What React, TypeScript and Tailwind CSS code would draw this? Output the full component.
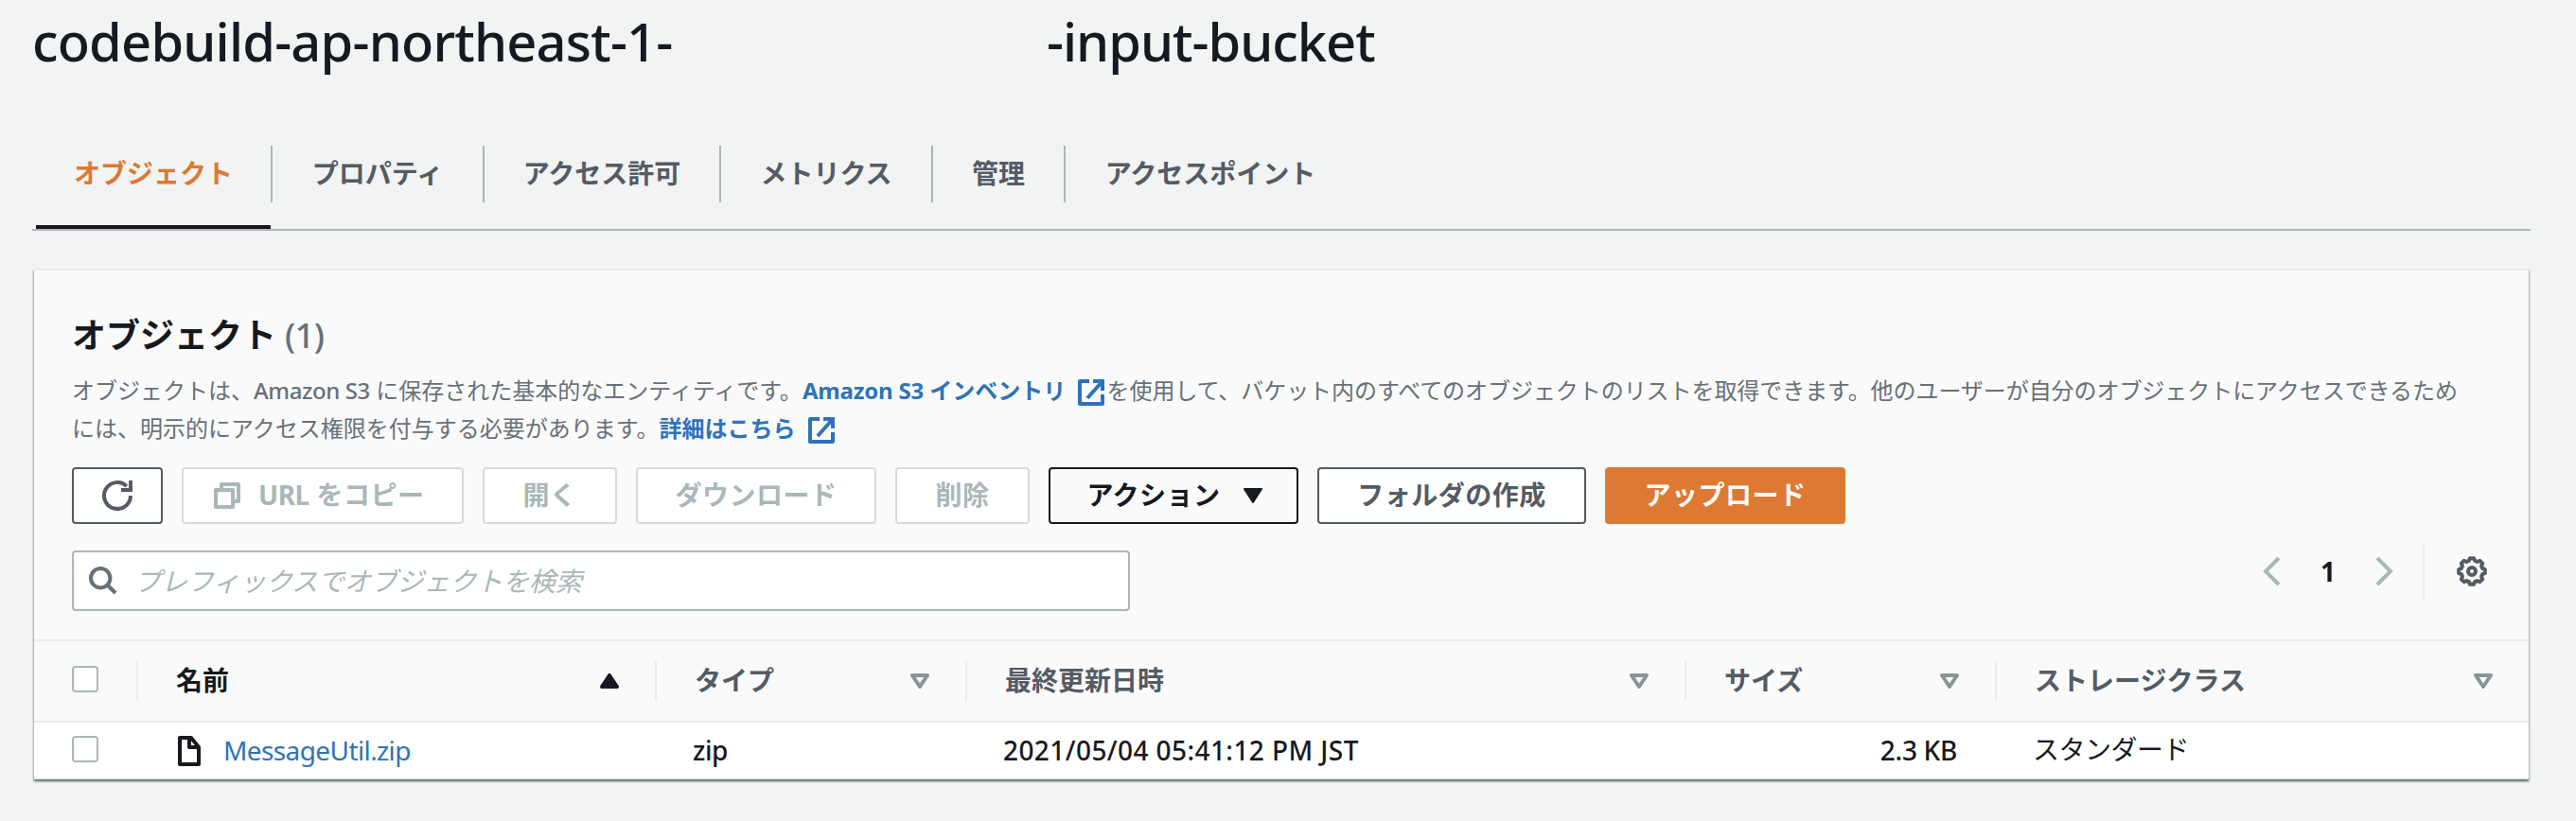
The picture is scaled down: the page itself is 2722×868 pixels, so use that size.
import React from 'react';
import { clsx } from 'clsx';

interface Tab {
  label: string;
  width: string;
  active?: boolean;
}

interface Column {
  label: string;
  width: string;
  sorted?: boolean;
}

const tabs: Tab[] = [
  { label: 'オブジェクト', width: 'w-[250px]', active: true },
  { label: 'プロパティ', width: 'w-[224px]' },
  { label: 'アクセス許可', width: 'w-[250px]' },
  { label: 'メトリクス', width: 'w-[224px]' },
  { label: '管理', width: 'w-[140px]' },
  { label: 'アクセスポイント', width: 'w-[306px]' },
];

const columns: Column[] = [
  { label: '名前', width: 'w-[548px]', sorted: true },
  { label: 'タイプ', width: 'w-[328px]' },
  { label: '最終更新日時', width: 'w-[760px]' },
  { label: 'サイズ', width: 'w-[328px]' },
  { label: 'ストレージクラス', width: 'w-[562px]' },
];

const RefreshIcon = () => (
  <svg className="h-8 w-8" viewBox="0 0 32 32" fill="none" stroke="currentColor" strokeWidth="4">
    <path d="M30 16a14 14 0 1 1-4.2-10" />
    <path d="M30 0v10H20" />
  </svg>
);

const CopyIcon = () => (
  <svg className="h-7 w-7" viewBox="0 0 28 28" fill="none" stroke="currentColor" strokeWidth="4" strokeLinejoin="round">
    <path d="M2 8h18v18H2z" />
    <path d="M8 8V2h18v18h-6" />
  </svg>
);

const ExternalIcon = () => (
  <svg className="inline-block h-7 w-7 align-[-7px]" viewBox="0 0 28 28" fill="none" stroke="currentColor" strokeWidth="4">
    <path d="M12 2H2v24h24V16" strokeLinejoin="round" />
    <path d="M16 2h10v10" />
    <path d="M26 2 10 20" />
  </svg>
);

const SearchIcon = () => (
  <svg className="h-[30px] w-[30px]" viewBox="0 0 30 30" fill="none" stroke="currentColor" strokeWidth="4">
    <circle cx="12.2" cy="12.2" r="10.2" />
    <path d="m19.5 19.5 8.5 8.5" />
  </svg>
);

// eight teeth, two outer and two inner points each
const gearPoints = Array.from({ length: 8 })
  .flatMap((_, i) => [
    [i * 45 - 8, 14],
    [i * 45 + 8, 14],
    [i * 45 + 16, 11.5],
    [i * 45 + 29, 11.5],
  ])
  .map(([deg, r]) => {
    const a = (deg * Math.PI) / 180;
    return `${(16 + r * Math.cos(a)).toFixed(2)},${(16 + r * Math.sin(a)).toFixed(2)}`;
  })
  .join(' ');

const GearIcon = () => (
  <svg className="h-8 w-8" viewBox="0 0 32 32" fill="none" stroke="currentColor" strokeWidth="4" strokeLinejoin="round">
    <polygon points={gearPoints} />
    <circle cx="16" cy="16" r="4" />
  </svg>
);

const FileIcon = () => (
  <svg className="mt-0.5 h-8 w-6" viewBox="0 0 24 32" fill="none" stroke="currentColor" strokeWidth="4" strokeLinejoin="round">
    <path d="M2 2h12l8 10v18H2z" />
    <path d="M12 2v10h10" />
  </svg>
);

const Chevron = ({ right = false }: { right?: boolean }) => (
  <svg className={clsx('h-8 w-5', right && 'rotate-180')} viewBox="0 0 20 32" fill="none" stroke="currentColor" strokeWidth="4">
    <path d="M18 2 4 16l14 14" />
  </svg>
);

const SortIcon = ({ sorted = false }: { sorted?: boolean }) => (
  <svg
    className={clsx('h-4 w-5', sorted ? 'rotate-180 text-[#16191f]' : 'text-[#879596]')}
    viewBox="0 0 20 16"
    fill={sorted ? 'currentColor' : 'none'}
    stroke="currentColor"
    strokeWidth="4"
    strokeLinejoin="round"
  >
    <path d="M2 2h16l-8 12z" />
  </svg>
);

interface ButtonProps {
  className: string;
  disabled?: boolean;
  children: React.ReactNode;
}

const Button: React.FC<ButtonProps> = ({ className, disabled, children }) => (
  <button
    disabled={disabled}
    className={clsx(
      'flex h-[60px] items-center rounded-[4px] border-2 text-[28px] leading-none font-bold tracking-[0.5px] whitespace-nowrap',
      disabled && 'border-[#d5dbdb] bg-white text-[#aab7b8]',
      className
    )}
  >
    {children}
  </button>
);

const Checkbox = () => <span className="block h-7 w-7 rounded-[4px] border-2 border-[#aab7b8] bg-white" />;

const App: React.FC = () => {
  return (
    <div className="h-[868px] w-[2722px] overflow-hidden bg-[#f2f3f3] font-['Noto_Sans','Noto_Sans_CJK_JP',sans-serif] text-[28px] text-[#16191f]">
      <h1 className="flex h-[86px] items-center pl-[34px] text-[56px] leading-none font-medium">
        <span className="w-[1072px] tracking-[-0.8px]">codebuild-ap-northeast-1-</span>
        <span className="tracking-[-1px]">-input-bucket</span>
      </h1>

      <nav className="mt-[68px] ml-[34px] flex h-[90px] w-[2640px] border-b-2 border-[#aab7b8] pl-1">
        {tabs.map((tab, i) => (
          <div key={tab.label} className={clsx('flex h-full flex-col justify-between', tab.width)}>
            <div
              className={clsx(
                'flex h-[60px] items-center justify-center pb-0.5 leading-none font-bold',
                i < tabs.length - 1 && 'border-r-2 border-[#aab7b8]',
                tab.active ? 'text-[#dd7932]' : 'text-[#545b64]'
              )}
            >
              {tab.label}
            </div>
            {tab.active && <div className="mr-0.5 h-1 bg-[#16191f]" />}
          </div>
        ))}
      </nav>

      <main className="mt-10 ml-9 w-[2636px] border-t-2 border-[#eaeded] bg-[#fafafa] shadow-[0_2px_2px_0_rgba(0,28,36,0.4),1px_2px_2px_0_rgba(0,28,36,0.2),-1px_2px_2px_0_rgba(0,28,36,0.2)]">
        <header className="h-[390px] px-10 pt-[47px]">
          <h2 className="flex h-11 items-center gap-[9px] text-[36px] leading-none font-bold">
            オブジェクト
            <span className="font-medium tracking-[-0.5px] text-[#687078]">(1)</span>
          </h2>
          <p className="mt-4 h-20 text-[24px] leading-10 whitespace-nowrap text-[#687078]">
            オブジェクトは、<span className="font-medium tracking-[-0.4px]">Amazon S3</span> に保存された基本的なエンティティです。
            <a className="font-bold text-[#2e73b8]">
              <span className="tracking-[-0.2px]">Amazon S3</span> インベントリ <span className="mr-[3px] ml-1.5"><ExternalIcon /></span>
            </a>
            <span className="tracking-[-0.06px]">
              を使用して、バケット内のすべてのオブジェクトのリストを取得できます。他のユーザーが自分のオブジェクトにアクセスできるため
            </span>
            <br />
            には、明示的にアクセス権限を付与する必要があります。
            <a className="font-bold text-[#2e73b8]">
              詳細はこちら <span className="ml-[7px]"><ExternalIcon /></span>
            </a>
          </p>

          <div className="mt-[21px] flex gap-5">
            <Button className="w-24 justify-center border-[#545b64] bg-white text-[#545b64]">
              <RefreshIcon />
            </Button>
            <Button disabled className="w-[298px] gap-[19px] pl-8">
              <CopyIcon />
              <span className="pb-0.5"><span className="tracking-[-0.5px]">URL</span> をコピー</span>
            </Button>
            <Button disabled className="w-[142px] justify-center pb-0.5">開く</Button>
            <Button disabled className="w-[254px] justify-center pb-0.5">ダウンロード</Button>
            <Button disabled className="w-[142px] justify-center pb-0.5">削除</Button>
            <Button className="w-[264px] justify-center gap-6 border-[#16191f] bg-[#fafafa] pl-0.5 text-[#16191f]">
              <span className="pb-0.5">アクション</span>
              <svg className="h-4 w-5" viewBox="0 0 20 16" fill="currentColor" stroke="currentColor" strokeWidth="2" strokeLinejoin="round">
                <path d="M1 1h18l-9 14z" />
              </svg>
            </Button>
            <Button className="w-[284px] justify-center border-[#545b64] bg-white pb-0.5 text-[#545b64]">フォルダの作成</Button>
            <Button className="w-[254px] justify-center border-[#dd7932] bg-[#dd7932] pb-0.5 text-white">アップロード</Button>
          </div>

          <div className="mt-5 flex">
            <div className="mt-2 flex h-16 w-[1118px] items-center gap-[18px] rounded-[4px] border-2 border-[#aab7b8] bg-white pl-4 text-[#687078]">
              <SearchIcon />
              <span className="leading-none tracking-[-0.1px] text-[#aab7b8] italic">プレフィックスでオブジェクトを検索</span>
            </div>
            <div className="ml-auto flex h-[60px] items-center pr-1 text-[#aab7b8]">
              <Chevron />
              <span className="w-[100px] text-center leading-none font-bold text-[#16191f]">1</span>
              <Chevron right />
              <span className="mr-[34px] ml-[30px] h-[60px] w-0.5 bg-[#eaeded]" />
              <span className="text-[#545b64]">
                <GearIcon />
              </span>
            </div>
          </div>
        </header>

        <section>
          <div className="flex h-[88px] items-center border-y-2 border-[#eaeded]">
            <div className="flex h-[42px] w-[110px] items-center border-r-2 border-[#eaeded] pb-1 pl-10">
              <Checkbox />
            </div>
            {columns.map((col, i) => (
              <div
                key={col.label}
                className={clsx(
                  'flex h-[42px] items-center justify-between pr-[38px] pl-10 leading-none font-bold',
                  i < columns.length - 1 && 'border-r-2 border-[#eaeded]',
                  col.sorted ? 'text-[#16191f]' : 'text-[#545b64]',
                  col.width
                )}
              >
                <span className="pb-0.5">{col.label}</span>
                <SortIcon sorted={col.sorted} />
              </div>
            ))}
          </div>
          <div className="flex h-[60px] items-center border-b-2 border-[#eaeded] bg-white leading-none font-medium">
            <div className="w-[150px] pb-0.5 pl-10">
              <Checkbox />
            </div>
            <div className="flex w-[546px] items-center gap-6 pl-0.5">
              <FileIcon />
              <a className="font-normal tracking-[-0.6px] text-[#2e73b8]">MessageUtil.zip</a>
            </div>
            <span className="w-[328px] tracking-[-0.4px]">zip</span>
            <span className="w-[760px] tracking-[0.42px]">2021/05/04 05:41:12 PM JST</span>
            <span className="w-[248px] text-right tracking-[-0.3px]">2.3 KB</span>
            <span className="pb-0.5 pl-20 font-normal tracking-[-0.5px]">スタンダード</span>
          </div>
        </section>
      </main>
    </div>
  );
};

export default App;
